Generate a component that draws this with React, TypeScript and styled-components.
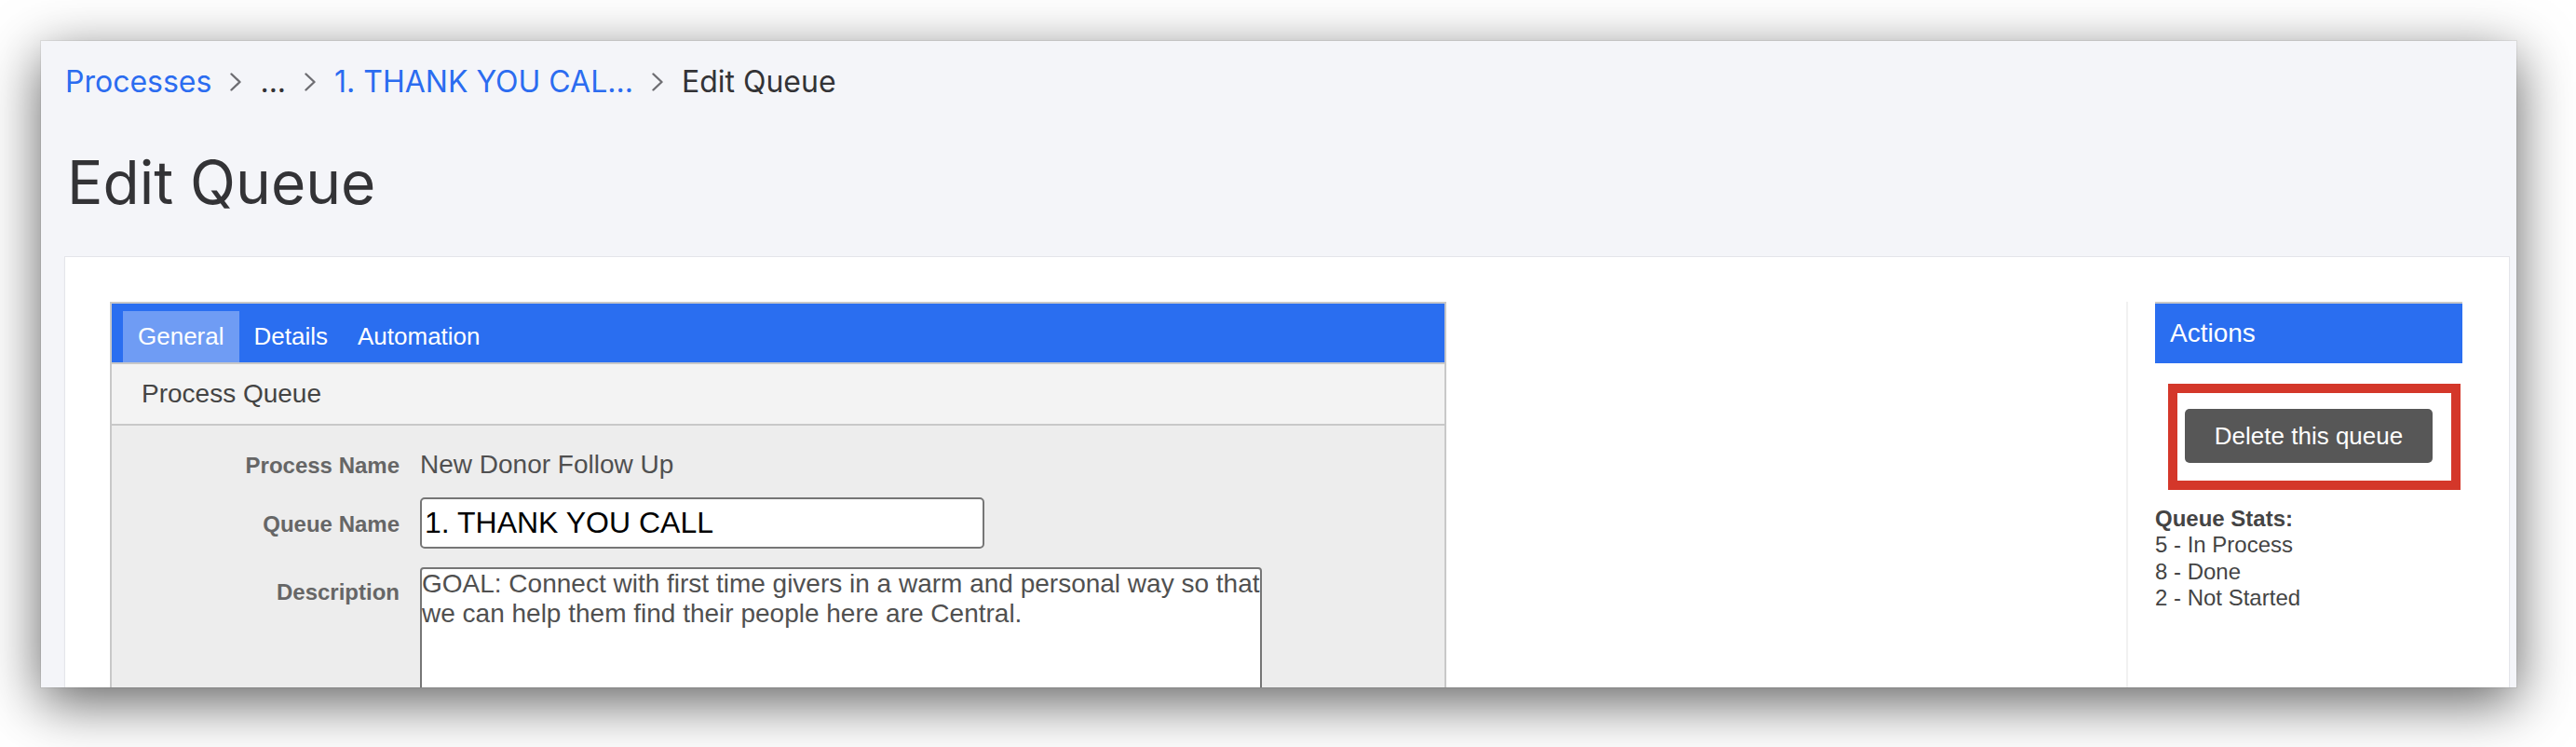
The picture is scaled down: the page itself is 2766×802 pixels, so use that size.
import React from 'react';
import styled, { createGlobalStyle } from 'styled-components';

const GlobalStyle = createGlobalStyle`
  html, body {
    margin: 0;
    padding: 0;
    background: #ffffff;
  }
  body {
    width: 2766px;
    height: 802px;
    overflow: hidden;
    font-family: "Liberation Sans", Arial, Helvetica, sans-serif;
  }
  *, *::before, *::after {
    box-sizing: border-box;
  }
`;

const Stage = styled.div`
  width: 2766px;
  height: 802px;
  padding: 44px 64px 0 44px;
`;

const Window = styled.div`
  width: 2658px;
  height: 694px;
  display: flex;
  flex-direction: column;
  padding: 26px 8px 0 26px;
  background: #f4f5f9;
  overflow: hidden;
  box-shadow: 0 16px 56px rgba(0, 0, 0, 0.62), 0 0 0 1px rgba(0, 0, 0, 0.06);
`;

const Breadcrumbs = styled.nav`
  display: flex;
  align-items: center;
  gap: 20px;
  height: 36px;
  font-family: Inter, "Noto Sans", sans-serif;
  font-size: 32px;
  line-height: 36px;
`;

const Crumb = styled.span<{ $link?: boolean }>`
  color: ${(p) => (p.$link ? '#2b6cf0' : '#333336')};
`;

const Title = styled.h1`
  margin: 52px 0 0 2px;
  font-family: Inter, "Noto Sans", sans-serif;
  font-size: 64px;
  line-height: 76px;
  font-weight: 400;
  color: #333336;
`;

const Card = styled.main`
  flex: 1;
  margin-top: 42px;
  display: flex;
  justify-content: space-between;
  align-items: flex-start;
  padding: 48px 50px 0 48px;
  background: #ffffff;
  box-shadow: 0 0 0 1px #e4e5ea, 0 1px 3px rgba(0, 0, 0, 0.06);
`;

const TabPanel = styled.section`
  width: 1435px;
  border: 2px solid #c8c8c8;
  border-bottom: none;
`;

const TabBar = styled.div`
  display: flex;
  padding: 8px 12px 0;
  background: #2a6ef0;
  border-bottom: 2px solid #c8c8c8;
`;

const Tab = styled.div<{ $active?: boolean }>`
  height: 55px;
  padding: 0 16px;
  line-height: 55px;
  font-size: 26px;
  color: #ffffff;
  background: ${(p) => (p.$active ? '#6f9cf4' : 'transparent')};
`;

const PanelHeader = styled.div`
  height: 66px;
  padding-left: 32px;
  line-height: 64px;
  font-size: 28px;
  color: #444444;
  background: #f3f3f3;
  border-bottom: 2px solid #c8c8c8;
`;

const Form = styled.div`
  display: grid;
  grid-template-columns: 309px 1fr;
  column-gap: 22px;
  row-gap: 20px;
  align-items: start;
  padding: 27px 0 240px;
  background: #ededed;
`;

const FieldLabel = styled.label<{ $pad: number }>`
  padding-top: ${(p) => p.$pad}px;
  text-align: right;
  font-weight: bold;
  font-size: 24px;
  line-height: 28px;
  color: #666666;
`;

const StaticValue = styled.div`
  font-size: 28px;
  line-height: 29px;
  color: #505050;
`;

const TextInput = styled.input`
  width: 606px;
  height: 55px;
  padding: 0 3px;
  border: 2px solid #767676;
  border-radius: 5px;
  background: #ffffff;
  font-family: "Liberation Sans", Arial, sans-serif;
  font-size: 32px;
  color: #000000;
  outline: none;
`;

const TextArea = styled.textarea`
  display: block;
  width: 904px;
  height: 260px;
  padding: 0;
  border: 2px solid #767676;
  border-radius: 4px;
  background: #ffffff;
  font-family: "Liberation Sans", Arial, sans-serif;
  font-size: 28px;
  line-height: 32px;
  color: #505050;
  resize: none;
  overflow: hidden;
  outline: none;
`;

const Sidebar = styled.aside`
  width: 361px;
  align-self: stretch;
  padding-left: 29px;
  border-left: 2px solid #f1f1f1;
`;

const SidebarHeader = styled.div`
  height: 66px;
  padding-left: 16px;
  line-height: 64px;
  font-size: 28px;
  color: #ffffff;
  background: #2a6ef0;
  border-top: 2px solid #c8c8c8;
`;

const ButtonRow = styled.div`
  display: flex;
  justify-content: center;
  padding-top: 49px;
`;

const ButtonWrap = styled.div`
  position: relative;
`;

const DeleteButton = styled.button`
  display: block;
  width: 266px;
  height: 58px;
  border: none;
  border-radius: 5px;
  background: #575757;
  color: #ffffff;
  font-family: "Liberation Sans", Arial, sans-serif;
  font-size: 26px;
  cursor: pointer;
`;

const Highlight = styled.span`
  position: absolute;
  top: -27px;
  left: -18px;
  width: 314px;
  height: 114px;
  border: 10px solid #d4372a;
  pointer-events: none;
`;

const Stats = styled.div`
  margin-top: 46px;
  font-size: 24px;
  line-height: 28.3px;
  color: #444444;

  strong {
    display: block;
  }
`;

const Chevron = () => (
  <svg width="12" height="20" viewBox="0 0 12 20" fill="none">
    <polyline
      points="1.5,1.5 10.5,10 1.5,18.5"
      stroke="#6e6e73"
      strokeWidth="2.4"
      strokeLinecap="round"
      strokeLinejoin="round"
    />
  </svg>
);

const tabs = ['General', 'Details', 'Automation'];
const stats = ['5 - In Process', '8 - Done', '2 - Not Started'];

export default function App() {
  return (
    <>
      <GlobalStyle />
      <Stage>
        <Window>
          <Breadcrumbs>
            <Crumb $link>Processes</Crumb>
            <Chevron />
            <Crumb>...</Crumb>
            <Chevron />
            <Crumb $link>1. THANK YOU CAL...</Crumb>
            <Chevron />
            <Crumb>Edit Queue</Crumb>
          </Breadcrumbs>
          <Title>Edit Queue</Title>

          <Card>
            <TabPanel>
              <TabBar>
                {tabs.map((t, i) => (
                  <Tab key={t} $active={i === 0}>
                    {t}
                  </Tab>
                ))}
              </TabBar>
              <PanelHeader>Process Queue</PanelHeader>
              <Form>
                <FieldLabel $pad={2}>Process Name</FieldLabel>
                <StaticValue>New Donor Follow Up</StaticValue>

                <FieldLabel $pad={15}>Queue Name</FieldLabel>
                <TextInput defaultValue="1. THANK YOU CALL" />

                <FieldLabel $pad={13}>Description</FieldLabel>
                <TextArea
                  readOnly
                  defaultValue="GOAL: Connect with first time givers in a warm and personal way so that we can help them find their people here are Central."
                />
              </Form>
            </TabPanel>

            <Sidebar>
              <SidebarHeader>Actions</SidebarHeader>
              <ButtonRow>
                <ButtonWrap>
                  <DeleteButton>Delete this queue</DeleteButton>
                  <Highlight />
                </ButtonWrap>
              </ButtonRow>
              <Stats>
                <strong>Queue Stats:</strong>
                {stats.map((s) => (
                  <div key={s}>{s}</div>
                ))}
              </Stats>
            </Sidebar>
          </Card>
        </Window>
      </Stage>
    </>
  );
}
